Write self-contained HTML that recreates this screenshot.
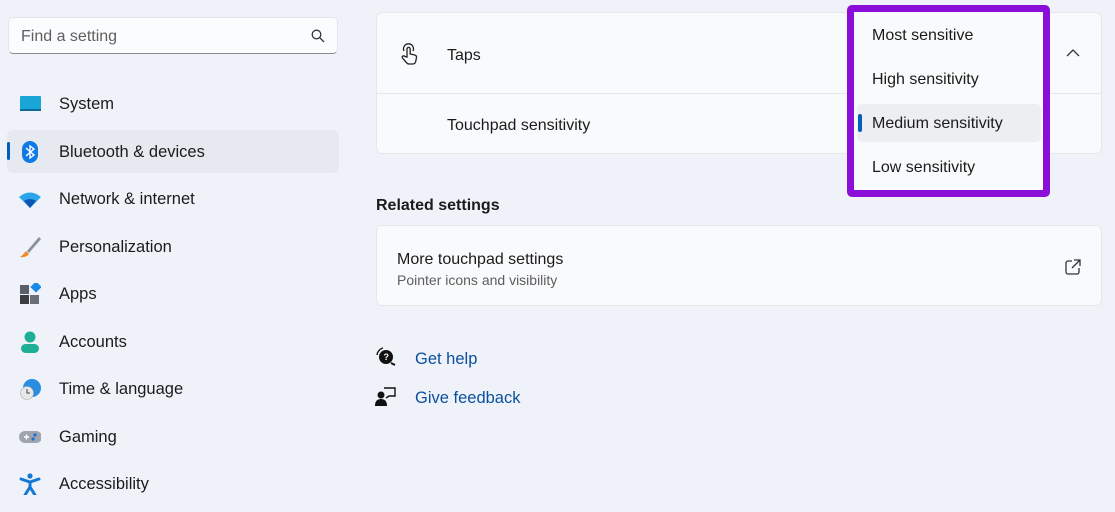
<!DOCTYPE html>
<html><head><meta charset="utf-8"><style>
*{box-sizing:border-box;margin:0;padding:0}
body{width:1115px;height:512px;overflow:hidden;background:#eff3f9;font-family:"Segoe UI","Liberation Sans",sans-serif;color:#1b1b1b;position:relative;font-size:16px}
.abs{position:absolute}
.search{left:8px;top:17px;width:330px;height:37px;background:#fbfcfe;border:1px solid #e2e5ea;border-bottom:1px solid #8a8a8a;border-radius:5px}
.search span{position:absolute;left:12px;top:10px;color:#5f5f5f;font-size:16px}
.nav{left:7px;width:332px;height:43px;border-radius:6px}
.nav .t{position:absolute;left:52px;top:13px;font-size:16.5px;color:#1b1b1b}
.nav .i{position:absolute;left:12px;top:11px;width:22px;height:22px}
.card{background:#f9fafc;border:1px solid #e5e7ea;border-radius:6px}
.link{color:#0b4f9c;font-size:16.5px}
</style></head><body>
<div class="abs search"><span>Find a setting</span>
<svg class="abs" style="left:302px;top:11px" width="14" height="14" viewBox="0 0 14 14"><circle cx="5.5" cy="5.5" r="4.3" fill="none" stroke="#333" stroke-width="1.3"/><path d="M8.6 8.6L13 13" stroke="#333" stroke-width="1.3"/></svg></div>

<div class="abs nav" style="top:82px"><svg class="i" viewBox="0 0 22 22"><rect x="1" y="3" width="21" height="15" rx="1" fill="#1aa6d6"/><rect x="1" y="16" width="21" height="2" fill="#0d6b9a"/></svg><div class="t">System</div></div>
<div class="abs nav" style="top:130px;background:#e6e9ef"><div class="abs" style="left:0;top:12px;width:3px;height:18px;background:#005fb8;border-radius:2px"></div><svg class="i" viewBox="0 0 22 22"><rect x="3" y="0" width="16" height="22" rx="8" fill="#0f7ae5"/><path d="M7 7l8 7-4 3V5l4 3-8 7" fill="none" stroke="#fff" stroke-width="1.4"/></svg><div class="t">Bluetooth &amp; devices</div></div>
<div class="abs nav" style="top:177px"><svg class="i" viewBox="0 0 22 22"><path d="M0 9Q11 0 22 9L11 20Z" fill="#2aa5ec"/><path d="M5 13Q11 9 17 13L11 20Z" fill="#0b56b5"/></svg><div class="t">Network &amp; internet</div></div>
<div class="abs nav" style="top:225px"><svg class="i" viewBox="0 0 22 22"><path d="M20 1L8 15l2 2L22 3Z" fill="#8a8f99"/><path d="M7 15l3 3q-3 4-9 3q3-2 6-6z" fill="#f08a2a"/></svg><div class="t">Personalization</div></div>
<div class="abs nav" style="top:272px"><svg class="i" viewBox="0 0 22 22"><rect x="1" y="2" width="9" height="9" fill="#5b6068"/><rect x="1" y="12" width="9" height="9" fill="#3a3d42"/><rect x="11" y="12" width="9" height="9" fill="#6a6f77"/><rect x="13" y="0" width="8" height="8" transform="rotate(45 17 4)" fill="#1a8ae8"/></svg><div class="t">Apps</div></div>
<div class="abs nav" style="top:320px"><svg class="i" viewBox="0 0 22 22"><circle cx="11" cy="6" r="5.5" fill="#1fae96"/><rect x="2" y="13" width="18" height="9" rx="4.5" fill="#1fae96"/></svg><div class="t">Accounts</div></div>
<div class="abs nav" style="top:367px"><svg class="i" viewBox="0 0 22 22"><circle cx="13" cy="10" r="9" fill="#2b8de0"/><circle cx="8" cy="15" r="6.5" fill="#e8e8ea" stroke="#aaa" stroke-width=".6"/><path d="M8 11v4h3" stroke="#444" fill="none"/></svg><div class="t">Time &amp; language</div></div>
<div class="abs nav" style="top:415px"><svg class="i" viewBox="0 0 22 22"><rect x="0" y="5" width="23" height="12" rx="6" fill="#9fa4ad"/><circle cx="16" cy="9" r="1.6" fill="#1a6fd6"/><circle cx="14" cy="13" r="1.6" fill="#1a6fd6"/><path d="M5 11h5M7.5 8.5v5" stroke="#fff" stroke-width="1.4"/></svg><div class="t">Gaming</div></div>
<div class="abs nav" style="top:462px"><svg class="i" viewBox="0 0 22 22"><circle cx="11" cy="3" r="2.6" fill="#1278d4"/><path d="M2 6l9 3 9-3M11 9v5l-5 8M11 14l5 8" stroke="#1278d4" stroke-width="3" fill="none" stroke-linecap="round"/></svg><div class="t">Accessibility</div></div>

<div class="abs card" style="left:376px;top:12px;width:726px;height:142px">
<div class="abs" style="left:0;right:0;top:80px;height:1px;background:#e6e8eb"></div>
<svg class="abs" style="left:22px;top:29px" width="22" height="24" viewBox="0 0 22 24"><path d="M5 9a5 5 0 1 1 9 0" fill="none" stroke="#222" stroke-width="1.3"/><path d="M8 15V7a1.6 1.6 0 0 1 3.2 0v5l4.5 1q2 .5 1.8 2.5l-.8 4Q16 22 14 22H10q-1.5 0-2.5-1.3L3.5 16q-.8-1.3.5-2 1-.5 2 .5z" fill="none" stroke="#222" stroke-width="1.3"/></svg>
<div class="abs" style="left:70px;top:34px">Taps</div>
<div class="abs" style="left:70px;top:104px">Touchpad sensitivity</div>
<svg class="abs" style="left:689px;top:35px" width="14" height="9" viewBox="0 0 14 9"><path d="M1 8l6-6 6 6" fill="none" stroke="#333" stroke-width="1.3"/></svg>
</div>

<div class="abs" style="left:376px;top:197px;font-weight:bold;font-size:16px">Related settings</div>
<div class="abs card" style="left:376px;top:225px;width:726px;height:81px">
<div class="abs" style="left:20px;top:25px">More touchpad settings</div>
<div class="abs" style="left:20px;top:46px;font-size:14px;color:#5d5d5d">Pointer icons and visibility</div>
<svg class="abs" style="left:688px;top:33px" width="16" height="16" viewBox="0 0 16 16"><path d="M7 2H3a2 2 0 0 0-2 2v9a2 2 0 0 0 2 2h9a2 2 0 0 0 2-2V9M9 1h6v6M15 1L7 9" fill="none" stroke="#333" stroke-width="1.3"/></svg>
</div>

<svg class="abs" style="left:375px;top:347px" width="22" height="20" viewBox="0 0 22 20"><circle cx="11" cy="10" r="7" fill="#111"/><path d="M2 8a8 8 0 0 1 6-7" fill="none" stroke="#111" stroke-width="1.4"/><path d="M16 16l4 2" stroke="#111" stroke-width="2"/><text x="8.5" y="13" font-size="9" fill="#fff" font-family="Liberation Sans" font-weight="bold">?</text></svg>
<div class="abs link" style="left:415px;top:350px">Get help</div>
<svg class="abs" style="left:375px;top:387px" width="22" height="20" viewBox="0 0 22 20"><circle cx="6" cy="8" r="3.5" fill="#111"/><path d="M0 19q0-7 6-7t6 7z" fill="#111"/><path d="M9 1h11v8h-6l-3 2" fill="none" stroke="#111" stroke-width="1.4"/></svg>
<div class="abs link" style="left:415px;top:389px">Give feedback</div>

<div class="abs" style="left:847px;top:5px;width:203px;height:192px;border:7px solid #8a0ed8;border-radius:5px;background:#f9fafc"></div>
<div class="abs" style="left:857px;top:104px;width:184px;height:38px;background:#eceef2;border-radius:5px"></div>
<div class="abs" style="left:858px;top:114px;width:4px;height:18px;background:#005fb8;border-radius:2px"></div>
<div class="abs" style="left:872px;top:27px">Most sensitive</div>
<div class="abs" style="left:872px;top:71px">High sensitivity</div>
<div class="abs" style="left:872px;top:115px">Medium sensitivity</div>
<div class="abs" style="left:872px;top:159px">Low sensitivity</div>
</body></html>
